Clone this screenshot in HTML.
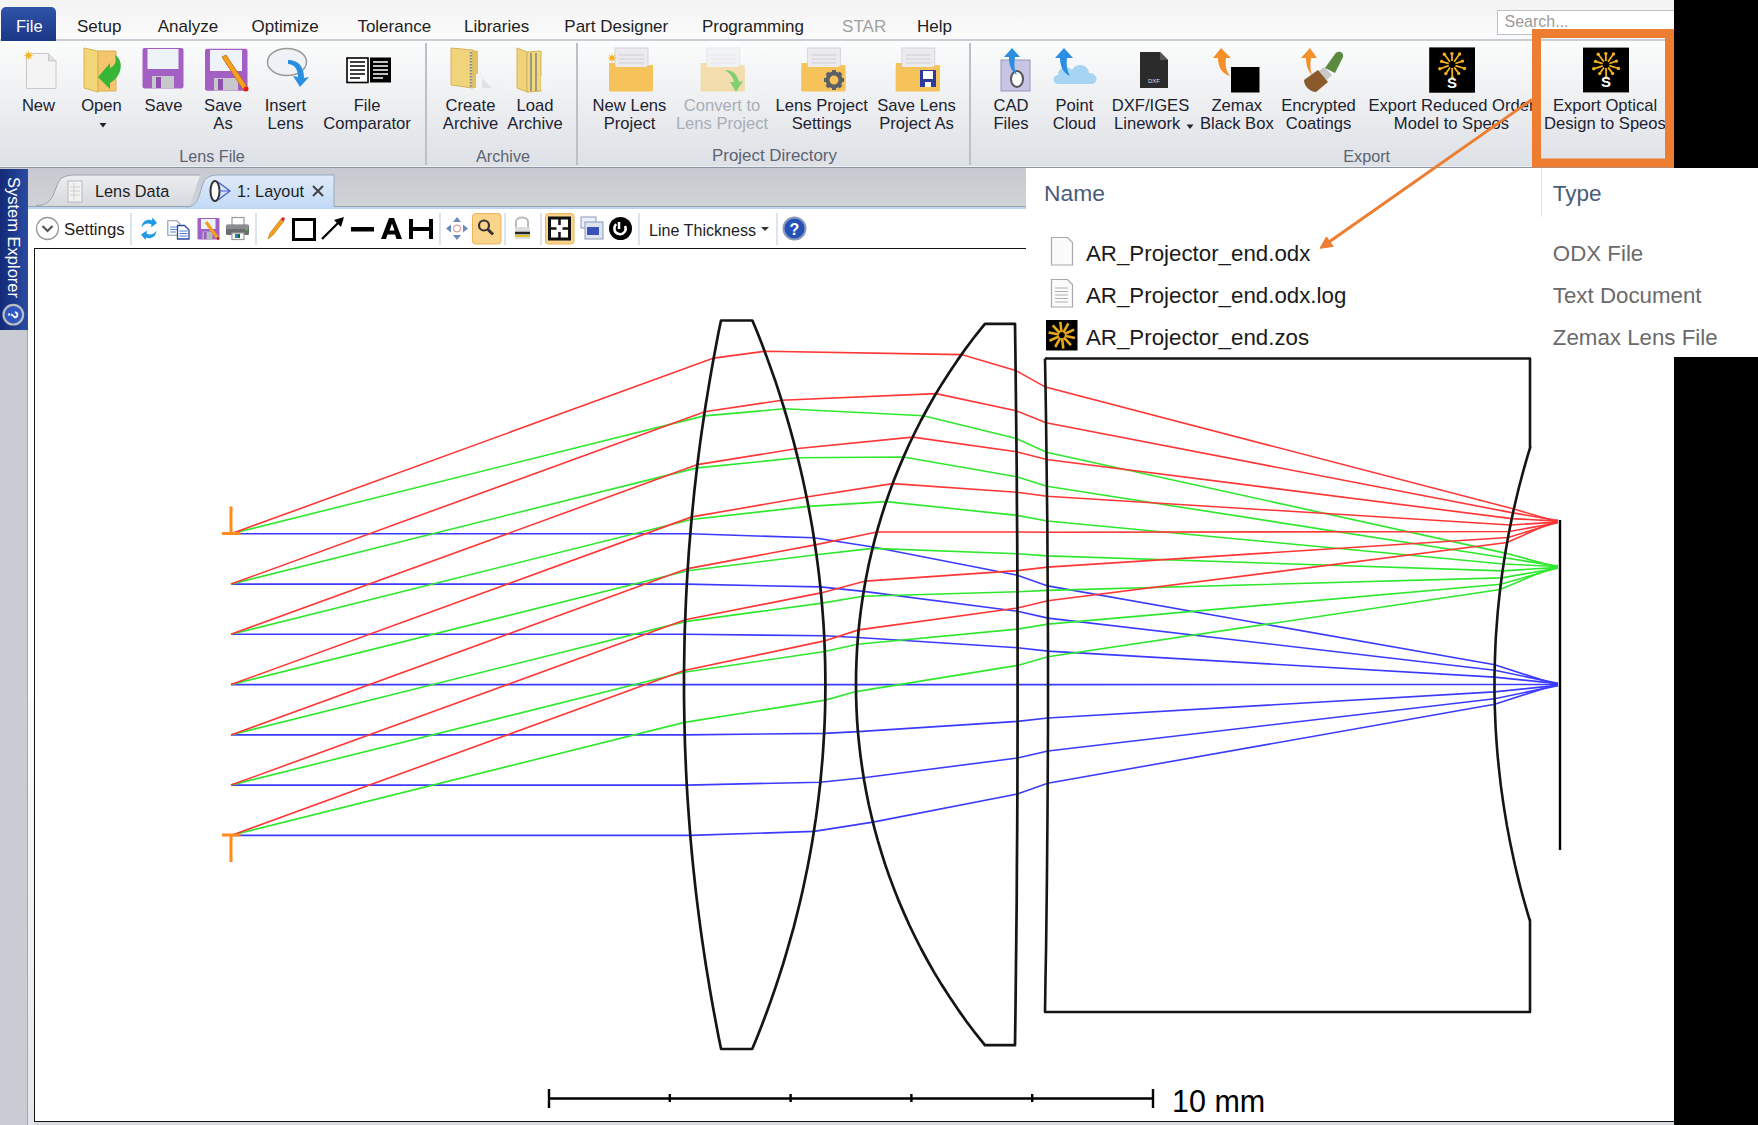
<!DOCTYPE html><html><head><meta charset="utf-8"><style>
*{margin:0;padding:0;box-sizing:border-box}
html,body{width:1758px;height:1125px;overflow:hidden;background:#fff;font-family:"Liberation Sans", sans-serif}
.a{position:absolute}
.t{position:absolute;white-space:nowrap;line-height:1;font-family:"Liberation Sans", sans-serif}
.c{width:300px;text-align:center}
</style></head><body>

<div class="a" style="left:0;top:0;width:1758px;height:40px;background:linear-gradient(#f3f3f4,#fbfbfb)"></div>
<div class="a" style="left:0;top:39px;width:1758px;height:2px;background:#c9ced6"></div>
<div class="a" style="left:1px;top:6.5px;width:55px;height:34px;border-radius:5px 5px 0 0;background:linear-gradient(#2f54a8,#1b3787)"></div>
<div class="t" style="left:16.0px;top:18.0px;font-size:16.5px;color:#fff;">File</div>
<div class="t" style="left:77.0px;top:17.6px;font-size:17px;color:#1e1e1e;">Setup</div>
<div class="t" style="left:157.7px;top:17.6px;font-size:17px;color:#1e1e1e;">Analyze</div>
<div class="t" style="left:251.6px;top:17.6px;font-size:17px;color:#1e1e1e;">Optimize</div>
<div class="t" style="left:357.4px;top:17.6px;font-size:17px;color:#1e1e1e;">Tolerance</div>
<div class="t" style="left:464.0px;top:17.6px;font-size:17px;color:#1e1e1e;">Libraries</div>
<div class="t" style="left:564.3px;top:17.6px;font-size:17px;color:#1e1e1e;">Part Designer</div>
<div class="t" style="left:701.9px;top:17.6px;font-size:17px;color:#1e1e1e;">Programming</div>
<div class="t" style="left:842.1px;top:17.6px;font-size:17px;color:#a0a0a0;">STAR</div>
<div class="t" style="left:917.0px;top:17.6px;font-size:17px;color:#1e1e1e;">Help</div>
<div class="a" style="left:1497px;top:10px;width:200px;height:25px;border:1px solid #bcc1c8;background:#fff"></div>
<div class="t" style="left:1504.5px;top:14.1px;font-size:16px;color:#9a9a9a;">Search...</div>
<div class="a" style="left:0;top:41px;width:1758px;height:126px;background:linear-gradient(#fbfcfc 0%,#eef0f2 45%,#dde0e5 100%)"></div>
<div class="a" style="left:0;top:166.5px;width:1758px;height:1.5px;background:#8c95a2"></div>
<div class="a" style="left:425px;top:43px;width:2px;height:122px;background:#bcc1c8"></div>
<div class="a" style="left:576px;top:43px;width:2px;height:122px;background:#bcc1c8"></div>
<div class="a" style="left:969px;top:43px;width:2px;height:122px;background:#bcc1c8"></div>
<div class="t c" style="left:-111.5px;top:98.4px;font-size:16.6px;color:#1c2230;">New</div>
<div class="t c" style="left:-48.5px;top:98.4px;font-size:16.6px;color:#1c2230;">Open</div>
<div class="t c" style="left:13.5px;top:98.4px;font-size:16.6px;color:#1c2230;">Save</div>
<div class="t c" style="left:73.0px;top:98.4px;font-size:16.6px;color:#1c2230;">Save</div>
<div class="t c" style="left:73.0px;top:116.4px;font-size:16.6px;color:#1c2230;">As</div>
<div class="t c" style="left:135.5px;top:98.4px;font-size:16.6px;color:#1c2230;">Insert</div>
<div class="t c" style="left:135.5px;top:116.4px;font-size:16.6px;color:#1c2230;">Lens</div>
<div class="t c" style="left:217.0px;top:98.4px;font-size:16.6px;color:#1c2230;">File</div>
<div class="t c" style="left:217.0px;top:116.4px;font-size:16.6px;color:#1c2230;">Comparator</div>
<div class="t c" style="left:320.5px;top:98.4px;font-size:16.6px;color:#1c2230;">Create</div>
<div class="t c" style="left:320.5px;top:116.4px;font-size:16.6px;color:#1c2230;">Archive</div>
<div class="t c" style="left:385.0px;top:98.4px;font-size:16.6px;color:#1c2230;">Load</div>
<div class="t c" style="left:385.0px;top:116.4px;font-size:16.6px;color:#1c2230;">Archive</div>
<div class="t c" style="left:479.5px;top:98.4px;font-size:16.6px;color:#1c2230;">New Lens</div>
<div class="t c" style="left:479.5px;top:116.4px;font-size:16.6px;color:#1c2230;">Project</div>
<div class="t c" style="left:572.0px;top:98.4px;font-size:16.6px;color:#a9aeb6;">Convert to</div>
<div class="t c" style="left:572.0px;top:116.4px;font-size:16.6px;color:#a9aeb6;">Lens Project</div>
<div class="t c" style="left:671.7px;top:98.4px;font-size:16.6px;color:#1c2230;">Lens Project</div>
<div class="t c" style="left:671.7px;top:116.4px;font-size:16.6px;color:#1c2230;">Settings</div>
<div class="t c" style="left:766.5px;top:98.4px;font-size:16.6px;color:#1c2230;">Save Lens</div>
<div class="t c" style="left:766.5px;top:116.4px;font-size:16.6px;color:#1c2230;">Project As</div>
<div class="t c" style="left:861.0px;top:98.4px;font-size:16.6px;color:#1c2230;">CAD</div>
<div class="t c" style="left:861.0px;top:116.4px;font-size:16.6px;color:#1c2230;">Files</div>
<div class="t c" style="left:924.4px;top:98.4px;font-size:16.6px;color:#1c2230;">Point</div>
<div class="t c" style="left:924.4px;top:116.4px;font-size:16.6px;color:#1c2230;">Cloud</div>
<div class="t c" style="left:1000.5px;top:98.4px;font-size:16.6px;color:#1c2230;">DXF/IGES</div>
<div class="t c" style="left:1086.8px;top:98.4px;font-size:16.6px;color:#1c2230;">Zemax</div>
<div class="t c" style="left:1086.8px;top:116.4px;font-size:16.6px;color:#1c2230;">Black Box</div>
<div class="t c" style="left:1168.5px;top:98.4px;font-size:16.6px;color:#1c2230;">Encrypted</div>
<div class="t c" style="left:1168.5px;top:116.4px;font-size:16.6px;color:#1c2230;">Coatings</div>
<div class="t c" style="left:1301.5px;top:98.4px;font-size:16.6px;color:#1c2230;">Export Reduced Order</div>
<div class="t c" style="left:1301.5px;top:116.4px;font-size:16.6px;color:#1c2230;">Model to Speos</div>
<div class="t c" style="left:1455.0px;top:98.4px;font-size:16.6px;color:#1c2230;">Export Optical</div>
<div class="t c" style="left:1455.0px;top:116.4px;font-size:16.6px;color:#1c2230;">Design to Speos</div>
<div class="t" style="left:1114.0px;top:116.4px;font-size:16.6px;color:#1c2230;">Linework</div>
<div class="t c" style="left:62.0px;top:148.3px;font-size:16.2px;color:#5b6472;">Lens File</div>
<div class="t c" style="left:353.0px;top:148.3px;font-size:16.2px;color:#5b6472;">Archive</div>
<div class="t c" style="left:624.5px;top:147.7px;font-size:16.9px;color:#5b6472;">Project Directory</div>
<div class="t c" style="left:1216.7px;top:148.3px;font-size:16.2px;color:#5b6472;">Export</div>
<svg class="a" style="left:0;top:0" width="1758" height="170"><path d="M99.5,123 h7 l-3.5,4.5z M1186.5,124.5 h7 l-3.5,4.5z" fill="#1c2230"/></svg>
<svg class="a" style="left:0;top:0" width="1758" height="170"><path d="M26.5,53.5 h22 l7.5,7.5 v27.5 h-29.5z" fill="#f4f4f4" stroke="#c8c8c8" stroke-width="1"/><path d="M48.5,53.5 v7.5 h7.5" fill="#e0e0e0" stroke="#c8c8c8"/><polygon points="33.5,55.5 30.3,56.3 32.0,59.0 29.3,57.3 28.5,60.5 27.7,57.3 25.0,59.0 26.7,56.3 23.5,55.5 26.7,54.7 25.0,52.0 27.7,53.7 28.5,50.5 29.3,53.7 32.0,52.0 30.3,54.7" fill="#f7b21e"/><path d="M84,48 l14,3 v41 l-14,-4z" fill="#f3d57a" stroke="#d9b44e"/><path d="M98,51 h18 v40 h-18z" fill="#f4c56c" stroke="#d9ae4e"/><path d="M98,77 L110,63 L110,68 C115,66 117,61 115,55 C123,59 124,75 110,83 L110,89 Z" fill="#36b536"/><rect x="142.5" y="48" width="41" height="40.5" rx="2" fill="#a45fc4"/><rect x="147.5" y="49" width="31" height="20" fill="#eef3f8"/><rect x="152" y="76" width="22" height="12.5" fill="#c8c8cc"/><rect x="156" y="77" width="5" height="11" fill="#9050b0"/><rect x="205" y="48.7" width="42.5" height="42" rx="2" fill="#a45fc4"/><rect x="210" y="50" width="32" height="21" fill="#eef3f8"/><rect x="214" y="78" width="24" height="12.5" fill="#c8c8cc"/><rect x="218" y="79" width="5" height="11" fill="#9050b0"/><path d="M222,57 l4,-2 l22,33 l-4,3z" fill="#f6a21c" stroke="#b56a10" stroke-width="0.8"/><circle cx="246" cy="89" r="2.5" fill="#e21b1b"/><ellipse cx="287" cy="62" rx="19.5" ry="13.5" fill="#eef2f6" stroke="#9a9a9a" stroke-width="1.5"/><path d="M288,60 c10,0 16,6 16,18 l5,-1 l-9,10 l-7,-11 l5,1 c0,-8 -4,-13 -10,-13z" fill="#2a8fe0"/><rect x="347" y="58" width="21" height="24.5" fill="#fff" stroke="#000" stroke-width="1.6"/><rect x="370" y="57.5" width="21" height="25" fill="#000"/><path d="M350,62 h15 M350,66 h15 M350,70 h15 M350,74 h15 M350,78 h10" stroke="#000" stroke-width="1.6"/><path d="M373,62 h15 M373,66 h15 M373,70 h15 M373,74 h15 M373,78 h10" stroke="#fff" stroke-width="1.6"/><path d="M451,48 l22,2 v38 l-22,-3z" fill="#f0d37a" stroke="#d4b45a"/><path d="M473,50 l5,1 v37 l-5,0z" fill="#e3c060"/><path d="M471,52 v36" stroke="#7a8aa0" stroke-width="2.5" stroke-dasharray="1.5,1.5"/><rect x="476" y="74" width="6" height="14" fill="#f4f4f4"/><path d="M482,78 l10,10 h-10z" fill="#d0d0d0" opacity="0.5"/><path d="M517,48 l10,4 v40 l-10,-4z" fill="#f0d37a" stroke="#d4b45a"/><path d="M527,52 l14,-1 v40 l-14,1z" fill="#f2d87c" stroke="#d4b45a"/><path d="M531,53 v38 M536,53 v38" stroke="#8a8a80" stroke-width="1.6"/><rect x="541" y="76" width="6" height="14" fill="#f4f4f4"/><g opacity="1"><rect x="615" y="48" width="33" height="24" fill="#ebebef" stroke="#d6d6da"/><path d="M619,55 h25 M619,59 h25 M619,63 h25" stroke="#d0d0d4" stroke-width="1.2"/><path d="M609,63 h6 v4 h31 l3,-2 h4 v26 h-44z" fill="#f5c35a"/><rect x="609" y="67" width="44" height="24.5" rx="1.5" fill="#f5c35a"/></g><polygon points="617.0,58.0 613.8,58.8 615.5,61.5 612.8,59.8 612.0,63.0 611.2,59.8 608.5,61.5 610.2,58.8 607.0,58.0 610.2,57.2 608.5,54.5 611.2,56.2 612.0,53.0 612.8,56.2 615.5,54.5 613.8,57.2" fill="#f7b21e"/><g opacity="0.45"><rect x="706.7" y="48" width="33" height="24" fill="#ebebef" stroke="#d6d6da"/><path d="M710.7,55 h25 M710.7,59 h25 M710.7,63 h25" stroke="#d0d0d4" stroke-width="1.2"/><path d="M700.7,63 h6 v4 h31 l3,-2 h4 v26 h-44z" fill="#f5c35a"/><rect x="700.7" y="67" width="44" height="24.5" rx="1.5" fill="#f5c35a"/></g><path d="M725,70 c8,0 12,4 14,12 l4,-1 l-7,11 l-6,-10 l4,0 c-1,-6 -5,-9 -9,-12z" fill="#80d070"/><g opacity="1"><rect x="807.4" y="48" width="33" height="24" fill="#ebebef" stroke="#d6d6da"/><path d="M811.4,55 h25 M811.4,59 h25 M811.4,63 h25" stroke="#d0d0d4" stroke-width="1.2"/><path d="M801.4,63 h6 v4 h31 l3,-2 h4 v26 h-44z" fill="#f5c35a"/><rect x="801.4" y="67" width="44" height="24.5" rx="1.5" fill="#f5c35a"/></g><g transform="translate(834,80)"><circle r="6.5" fill="none" stroke="#5b6068" stroke-width="4"/><rect x="-2" y="-10" width="4" height="5" fill="#5b6068" transform="rotate(0)"/><rect x="-2" y="-10" width="4" height="5" fill="#5b6068" transform="rotate(45)"/><rect x="-2" y="-10" width="4" height="5" fill="#5b6068" transform="rotate(90)"/><rect x="-2" y="-10" width="4" height="5" fill="#5b6068" transform="rotate(135)"/><rect x="-2" y="-10" width="4" height="5" fill="#5b6068" transform="rotate(180)"/><rect x="-2" y="-10" width="4" height="5" fill="#5b6068" transform="rotate(225)"/><rect x="-2" y="-10" width="4" height="5" fill="#5b6068" transform="rotate(270)"/><rect x="-2" y="-10" width="4" height="5" fill="#5b6068" transform="rotate(315)"/></g><g opacity="1"><rect x="901.8" y="48" width="33" height="24" fill="#ebebef" stroke="#d6d6da"/><path d="M905.8,55 h25 M905.8,59 h25 M905.8,63 h25" stroke="#d0d0d4" stroke-width="1.2"/><path d="M895.8,63 h6 v4 h31 l3,-2 h4 v26 h-44z" fill="#f5c35a"/><rect x="895.8" y="67" width="44" height="24.5" rx="1.5" fill="#f5c35a"/></g><rect x="920" y="70" width="16" height="17" fill="#2b3a9c"/><rect x="923" y="71" width="10" height="8" fill="#fff"/><rect x="925" y="82" width="6" height="5" fill="#fff"/><rect x="1001" y="60" width="29" height="31" fill="#c8c4e4" stroke="#9a96b8"/><ellipse cx="1017" cy="79" rx="6" ry="8" fill="#fff" stroke="#555" stroke-width="2"/><path d="M1012,48 l-8,9 h5 c0,8 2,14 8,18 c-3,-5 -3,-11 -2,-18 h5z" fill="#2b8ee0"/><path d="M1058,84 c-6,0 -6,-9 0,-9 c0,-8 10,-10 14,-5 c4,-8 16,-6 17,3 c8,-1 11,11 2,11z" fill="#a8d4f4"/><path d="M1064,48 l-9,10 h5 c0,8 3,15 10,18 c-3,-5 -4,-11 -3,-18 h6z" fill="#2b8ee0"/><path d="M1140,52 h20 l8,8 v28 h-28z" fill="#2b2b2b"/><path d="M1160,52 v8 h8" fill="#555"/><text x="1154" y="83" font-family="Liberation Sans" font-size="6" fill="#ddd" text-anchor="middle">DXF</text><rect x="1231" y="67" width="28.5" height="25.5" fill="#000"/><path d="M1221,48 l-8,10 h5 c0,9 4,16 12,18 c-4,-5 -5,-11 -4,-18 h5z" fill="#f4902a"/><path d="M1325,68 l10,-14 c3,-4 9,-2 8,3 l-8,16z" fill="#5a8a40"/><path d="M1318,72 l6,-5 l8,8 l-5,5z" fill="#c8c8c8"/><path d="M1304,80 l14,-10 l10,12 l-12,10 c-6,0 -12,-6 -12,-12z" fill="#8a5a2a"/><path d="M1310,48 l-9,10 h5 c0,7 2,13 6,17 c-2,-5 -2,-11 -1,-17 h6z" fill="#f4902a"/><rect x="1429.2" y="47.4" width="45.8" height="45.3" fill="#000"/><line x1="1455.4" y1="65.6" x2="1464.5" y2="68.5" stroke="#f2b01c" stroke-width="1.8"/><circle cx="1464.5" cy="68.5" r="1.7" fill="#f2b01c"/><line x1="1454.2" y1="67.4" x2="1458.7" y2="73.4" stroke="#f2b01c" stroke-width="1.8"/><circle cx="1458.7" cy="73.4" r="1.7" fill="#f2b01c"/><line x1="1452.1" y1="68.1" x2="1452.3" y2="77.6" stroke="#f2b01c" stroke-width="1.8"/><circle cx="1452.3" cy="77.6" r="1.7" fill="#f2b01c"/><line x1="1450.1" y1="67.5" x2="1445.8" y2="73.6" stroke="#f2b01c" stroke-width="1.8"/><circle cx="1445.8" cy="73.6" r="1.7" fill="#f2b01c"/><line x1="1448.8" y1="65.7" x2="1439.8" y2="68.8" stroke="#f2b01c" stroke-width="1.8"/><circle cx="1439.8" cy="68.8" r="1.7" fill="#f2b01c"/><line x1="1448.8" y1="63.6" x2="1441.6" y2="61.4" stroke="#f2b01c" stroke-width="1.8"/><circle cx="1441.6" cy="61.4" r="1.7" fill="#f2b01c"/><line x1="1450.0" y1="61.8" x2="1444.3" y2="54.2" stroke="#f2b01c" stroke-width="1.8"/><circle cx="1444.3" cy="54.2" r="1.7" fill="#f2b01c"/><line x1="1452.1" y1="61.1" x2="1451.9" y2="53.6" stroke="#f2b01c" stroke-width="1.8"/><circle cx="1451.9" cy="53.6" r="1.7" fill="#f2b01c"/><line x1="1454.1" y1="61.8" x2="1459.6" y2="54.0" stroke="#f2b01c" stroke-width="1.8"/><circle cx="1459.6" cy="54.0" r="1.7" fill="#f2b01c"/><line x1="1455.4" y1="63.5" x2="1462.5" y2="61.1" stroke="#f2b01c" stroke-width="1.8"/><circle cx="1462.5" cy="61.1" r="1.7" fill="#f2b01c"/><text x="1452.1000000000001" y="87.69999999999999" font-family="Liberation Sans" font-weight="bold" font-size="15" fill="#fff" text-anchor="middle">S</text><rect x="1583" y="47.6" width="46" height="44.8" fill="#000"/><line x1="1609.3" y1="65.7" x2="1618.4" y2="68.5" stroke="#f2b01c" stroke-width="1.8"/><circle cx="1618.4" cy="68.5" r="1.7" fill="#f2b01c"/><line x1="1608.1" y1="67.4" x2="1612.6" y2="73.4" stroke="#f2b01c" stroke-width="1.8"/><circle cx="1612.6" cy="73.4" r="1.7" fill="#f2b01c"/><line x1="1606.0" y1="68.1" x2="1606.2" y2="77.6" stroke="#f2b01c" stroke-width="1.8"/><circle cx="1606.2" cy="77.6" r="1.7" fill="#f2b01c"/><line x1="1604.0" y1="67.5" x2="1599.7" y2="73.6" stroke="#f2b01c" stroke-width="1.8"/><circle cx="1599.7" cy="73.6" r="1.7" fill="#f2b01c"/><line x1="1602.7" y1="65.8" x2="1593.7" y2="68.8" stroke="#f2b01c" stroke-width="1.8"/><circle cx="1593.7" cy="68.8" r="1.7" fill="#f2b01c"/><line x1="1602.7" y1="63.6" x2="1595.5" y2="61.4" stroke="#f2b01c" stroke-width="1.8"/><circle cx="1595.5" cy="61.4" r="1.7" fill="#f2b01c"/><line x1="1603.9" y1="61.8" x2="1598.2" y2="54.2" stroke="#f2b01c" stroke-width="1.8"/><circle cx="1598.2" cy="54.2" r="1.7" fill="#f2b01c"/><line x1="1606.0" y1="61.1" x2="1605.8" y2="53.6" stroke="#f2b01c" stroke-width="1.8"/><circle cx="1605.8" cy="53.6" r="1.7" fill="#f2b01c"/><line x1="1608.0" y1="61.8" x2="1613.5" y2="54.0" stroke="#f2b01c" stroke-width="1.8"/><circle cx="1613.5" cy="54.0" r="1.7" fill="#f2b01c"/><line x1="1609.3" y1="63.5" x2="1616.4" y2="61.1" stroke="#f2b01c" stroke-width="1.8"/><circle cx="1616.4" cy="61.1" r="1.7" fill="#f2b01c"/><text x="1606.0" y="87.4" font-family="Liberation Sans" font-weight="bold" font-size="15" fill="#fff" text-anchor="middle">S</text></svg>
<div class="a" style="left:0;top:168px;width:1758px;height:957px;background:#c9cdd3"></div>
<div class="a" style="left:28px;top:168px;width:1730px;height:39.5px;background:linear-gradient(#c6cad0,#d0d3d8)"></div>
<div class="a" style="left:28px;top:207px;width:1730px;height:913px;background:#fff"></div>
<div class="a" style="left:28px;top:206.5px;width:1730px;height:2px;background:#bcd6f2"></div>
<div class="a" style="left:28px;top:205.5px;width:1730px;height:1px;background:#9ea3aa"></div>
<div class="a" style="left:0;top:165.5px;width:1758px;height:1px;background:#eceef1"></div>
<div class="a" style="left:28px;top:1121px;width:1730px;height:4px;background:#d8dbdf"></div>
<div class="a" style="left:27px;top:330px;width:1.2px;height:795px;background:#a3a8b0"></div>
<div class="a" style="left:28.2px;top:700px;width:5.5px;height:425px;background:linear-gradient(#fbfbfc,#e3e6ea)"></div>
<svg class="a" style="left:0;top:160px" width="400" height="50">
<path d="M36,45.5 C48,45.5 52,40 56,28 C59,19 62,15 76,15 H200 L190,45.5z" fill="url(#g1)"/>
<path d="M36,45.5 C48,45.5 52,40 56,28 C59,19 62,15 76,15 H200" fill="none" stroke="#9ea4ad" stroke-width="1"/>
<path d="M186,47.5 C196,47 198,40 201,30 C204,19 206,15 220,15 H334 V47.5z" fill="url(#g2)"/>
<path d="M186,47 C196,47 198,40 201,30 C204,19 206,15 220,15 H334 V47" fill="none" stroke="#98a9be" stroke-width="1"/>
<defs><linearGradient id="g1" x1="0" y1="0" x2="0" y2="1"><stop offset="0" stop-color="#eceef1"/><stop offset="1" stop-color="#d6d9de"/></linearGradient>
<linearGradient id="g2" x1="0" y1="0" x2="0" y2="1"><stop offset="0" stop-color="#dfeaf8"/><stop offset="1" stop-color="#c3dbf6"/></linearGradient></defs>
<rect x="68" y="21" width="14" height="21" fill="#f2f2f2" stroke="#b9b9b9"/><path d="M70,27 h10 M70,31 h10 M70,35 h10 M74,23 v17" stroke="#cfcfcf"/>
<ellipse cx="215" cy="31" rx="4.5" ry="10" fill="#fff" stroke="#333" stroke-width="2"/><path d="M218,22 L230,31 L218,40 M219,31 H230" stroke="#4a5ad0" fill="none" stroke-width="1.2"/>
<path d="M313,26 l10,10 M323,26 l-10,10" stroke="#444" stroke-width="2"/>
</svg>
<div class="t" style="left:95.0px;top:183.2px;font-size:16.3px;color:#1e1e1e;">Lens Data</div>
<div class="t" style="left:237.0px;top:182.9px;font-size:16.3px;color:#1e1e1e;">1: Layout</div>
<div class="a" style="left:0;top:168.5px;width:28px;height:161px;background:linear-gradient(90deg,#132a78,#2a4ba3)"></div>
<div class="t" style="left:4px;top:177px;font-size:16.5px;color:#fff;transform-origin:0 0;transform:translate(18px,0) rotate(90deg)">System Explorer</div>
<svg class="a" style="left:0;top:300px" width="28" height="30"><circle cx="13.3" cy="14.7" r="9.8" fill="#2f55c0" stroke="#b9bcc2" stroke-width="2.2"/><text x="0" y="0" transform="translate(13.3,14.7) rotate(90) translate(0,5)" font-family="Liberation Sans" font-weight="bold" font-size="14" fill="#fff" text-anchor="middle">?</text></svg>
<div class="t" style="left:64.0px;top:221.8px;font-size:16.8px;color:#1e1e1e;">Settings</div>
<div class="t" style="left:649.0px;top:222.4px;font-size:16.1px;color:#1e1e1e;">Line Thickness</div>
<svg class="a" style="left:0;top:0" width="820" height="250"><circle cx="47.5" cy="228.5" r="11" fill="#fff" stroke="#9a9a9a" stroke-width="1.3"/><path d="M42.5,226 l5,5 l5,-5" stroke="#555" stroke-width="2.2" fill="none"/><line x1="131" y1="213" x2="131" y2="245" stroke="#c5d3e3" stroke-width="1.2"/><line x1="256" y1="213" x2="256" y2="245" stroke="#c5d3e3" stroke-width="1.2"/><line x1="440" y1="213" x2="440" y2="245" stroke="#c5d3e3" stroke-width="1.2"/><line x1="505" y1="213" x2="505" y2="245" stroke="#c5d3e3" stroke-width="1.2"/><line x1="541" y1="213" x2="541" y2="245" stroke="#c5d3e3" stroke-width="1.2"/><line x1="639" y1="213" x2="639" y2="245" stroke="#c5d3e3" stroke-width="1.2"/><line x1="777" y1="213" x2="777" y2="245" stroke="#c5d3e3" stroke-width="1.2"/><path d="M141.5,227.5 C142,220 149,218.5 152,220.5 L152.5,217.5 L157,223 L151,227.5 L151.5,224.5 C148,222.5 144,223.5 141.5,227.5z" fill="#1e9be8"/><path d="M156.5,230.5 C156,238 149,239.5 146,237.5 L145.5,240 L141,234.5 L147,230.5 L146.5,233.5 C150,235.5 154,234.5 156.5,230.5z" fill="#1e9be8"/><path d="M167.8,220.8 h9 l3,3 v11.5 h-12z" fill="#fff" stroke="#8a9ab0" stroke-width="1.1"/><path d="M170,227 h8 M170,229.5 h8 M170,232 h6" stroke="#5a8ad8" stroke-width="1.1"/><path d="M177.5,225.5 h7 l4.5,4.5 v9 h-11.5z" fill="#fff" stroke="#2a4aa0" stroke-width="1.3"/><path d="M179.5,231 h8 M179.5,233.5 h8 M179.5,236 h8" stroke="#4a7ad0" stroke-width="1.1"/><rect x="197.5" y="218" width="22" height="21.5" rx="1" fill="#a060c8"/><rect x="201" y="219" width="14.5" height="10" fill="#eaf2fa"/><rect x="202.5" y="231.5" width="10" height="8" fill="#b8b8c0"/><rect x="204" y="232" width="2.5" height="7" fill="#9a5ac0"/><path d="M206,222 L217.5,238" stroke="#f4a01a" stroke-width="3.2"/><circle cx="218" cy="238.5" r="1.4" fill="#d02020"/><rect x="232" y="217.5" width="12" height="9" fill="#fff" stroke="#9a9a9a" stroke-width="1.2"/><rect x="226" y="224.5" width="23" height="10.5" rx="1.5" fill="#6a6c70"/><rect x="226.5" y="225" width="22" height="4" fill="#8a8c90"/><rect x="232" y="233" width="12" height="6.5" fill="#fff" stroke="#9a9a9a" stroke-width="1.2"/><rect x="235" y="234" width="5" height="4" fill="#2a7ac0"/><rect x="238" y="234" width="2" height="4" fill="#1a6a30"/><circle cx="246.5" cy="229.5" r="1" fill="#6ad04a"/><path d="M268,239 l2,-6 l11,-14 l3,2 l-11,14z" fill="#f4a21c" stroke="#b06a10" stroke-width="0.6"/><circle cx="283" cy="219" r="1.8" fill="#e02020"/><rect x="293.5" y="219.5" width="21" height="20" fill="none" stroke="#000" stroke-width="3"/><path d="M322,239 L341,220" stroke="#000" stroke-width="2.3"/><path d="M344,217 l-10,3 l7,7z" fill="#000"/><rect x="351" y="227" width="23" height="4.5" fill="#000"/><path d="M381,239 l8,-21 h5 l8,21 h-5.5 l-1.5,-4.5 h-7.5 l-1.5,4.5z M389.5,230.5 h5 l-2.5,-7z" fill="#000" fill-rule="evenodd"/><path d="M411,219 v20 M431,219 v20 M411,229 h20" stroke="#000" stroke-width="4"/><path d="M457,217 l4,5 h-8z M457,240 l4,-5 h-8z M446,228.5 l5,-4 v8z M468,228.5 l-5,-4 v8z" fill="#6a8ab8"/><circle cx="457" cy="228.5" r="3.5" fill="none" stroke="#e08080" stroke-width="1"/><rect x="472.5" y="213.5" width="28.5" height="30.5" rx="3" fill="#fbd38a" stroke="#e8b45c"/><circle cx="484" cy="225.5" r="5" fill="none" stroke="#333" stroke-width="2.2"/><path d="M488,229.5 l5,5" stroke="#333" stroke-width="3"/><path d="M516,228 v-6 c0,-6 12,-6 12,0 v6" fill="none" stroke="#bbb" stroke-width="2"/><rect x="515" y="227" width="15" height="12" fill="#ddd"/><path d="M515,233 h15" stroke="#222" stroke-width="2.5"/><path d="M515,236 h15" stroke="#e0c020" stroke-width="2"/><rect x="545.5" y="213.5" width="28.5" height="30.5" rx="3" fill="#fbd38a" stroke="#e8b45c"/><rect x="549.5" y="218" width="20" height="21" fill="#fff" stroke="#111" stroke-width="3"/><path d="M559.5,219 v6 M559.5,232 v6 M550.5,228.5 h6 M562.5,228.5 h6" stroke="#111" stroke-width="2.5"/><rect x="581" y="217" width="15" height="11" fill="#eef" stroke="#8a9ab8"/><rect x="585" y="222" width="18" height="17" fill="#dde4f0" stroke="#8a9ab8"/><rect x="587" y="227" width="12" height="8" fill="#3a52b8"/><circle cx="620.5" cy="228.5" r="11.5" fill="#000"/><path d="M616,224 c-3,4 -2,9 3,10 c5,1 8,-4 6,-8 M619,222 v7" stroke="#fff" stroke-width="2.5" fill="none"/><path d="M761,227 h8 l-4,4z" fill="#333"/><circle cx="794.5" cy="228.5" r="11" fill="#2450b8" stroke="#8a9ab8" stroke-width="2"/><text x="794.5" y="235" font-family="Liberation Sans" font-weight="bold" font-size="16" fill="#fff" text-anchor="middle">?</text></svg>
<div class="a" style="left:33.5px;top:247.5px;width:1700px;height:874px;border:1.5px solid #151515;background:#fff"></div>
<svg class="a" style="left:0;top:0" width="1758" height="1125"><g fill="none" stroke-width="1.6"><polyline points="231.0,533.8 690.3,533.8 813.9,537.8 872.9,547.0 1017.4,575.2 1047.7,585.9 1494.7,664.8 1558.0,685.0" stroke="#3b3bff"/>
<polyline points="231.0,584.1 686.8,584.1 820.3,586.9 863.7,591.4 1017.5,611.2 1047.9,618.1 1494.6,670.3 1558.0,683.4" stroke="#3b3bff"/>
<polyline points="231.0,634.3 684.7,634.3 824.1,635.8 857.9,637.5 1017.6,647.8 1048.0,651.1 1494.5,677.1 1558.0,683.6" stroke="#3b3bff"/>
<polyline points="231.0,684.6 684.0,684.6 825.4,684.6 856.0,684.6 1017.6,684.6 1048.0,684.6 1494.5,684.5 1558.0,684.5" stroke="#3b3bff"/>
<polyline points="231.0,734.9 684.7,734.9 824.1,733.4 858.0,731.6 1017.6,721.4 1048.0,718.0 1494.5,691.9 1558.0,685.4" stroke="#3b3bff"/>
<polyline points="231.0,785.1 686.8,785.1 820.3,782.2 863.7,777.8 1017.5,758.0 1047.9,751.0 1494.6,698.7 1558.0,685.6" stroke="#3b3bff"/>
<polyline points="231.0,835.4 690.3,835.4 813.9,831.4 872.9,822.1 1017.4,794.0 1047.7,783.3 1494.7,704.2 1558.0,684.0" stroke="#3b3bff"/>
<polyline points="231.0,533.8 704.1,415.9 784.2,408.8 923.5,415.7 1016.4,438.4 1046.5,452.2 1505.3,553.1 1558.0,567.3" stroke="#2ee82e"/>
<polyline points="231.0,584.1 697.0,467.9 797.8,457.8 903.5,457.0 1016.7,476.7 1046.9,486.2 1504.5,557.8 1558.0,566.1" stroke="#2ee82e"/>
<polyline points="231.0,634.3 691.5,519.5 808.4,506.4 886.2,501.6 1017.0,515.4 1047.2,521.0 1503.6,564.0 1558.0,566.5" stroke="#2ee82e"/>
<polyline points="231.0,684.6 687.6,570.8 816.4,554.8 872.5,548.4 1017.3,553.8 1047.5,555.9 1502.5,570.9 1558.0,567.4" stroke="#2ee82e"/>
<polyline points="231.0,734.9 685.1,621.6 821.9,603.1 862.9,596.3 1017.4,591.8 1047.7,590.4 1501.6,577.9 1558.0,568.1" stroke="#2ee82e"/>
<polyline points="231.0,785.1 684.0,672.2 824.8,651.5 857.4,644.3 1017.5,629.1 1047.9,624.1 1500.8,584.3 1558.0,567.7" stroke="#2ee82e"/>
<polyline points="231.0,835.4 684.4,722.4 825.3,700.1 856.0,691.6 1017.6,665.4 1048.0,656.7 1500.1,589.5 1558.0,565.2" stroke="#2ee82e"/>
<polyline points="231.0,533.8 713.7,358.1 764.6,351.3 961.4,354.6 1015.6,370.4 1045.5,387.1 1513.8,509.0 1558.0,522.0" stroke="#ff3636"/>
<polyline points="231.0,584.1 704.7,411.7 781.6,400.3 936.0,393.6 1016.1,410.8 1046.1,422.8 1513.0,512.9 1558.0,520.6" stroke="#ff3636"/>
<polyline points="231.0,634.3 697.4,464.6 795.5,448.8 912.6,437.1 1016.5,451.8 1046.6,459.5 1511.8,518.6 1558.0,521.1" stroke="#ff3636"/>
<polyline points="231.0,684.6 691.8,516.9 806.6,497.0 892.6,483.6 1016.9,492.3 1047.0,496.2 1510.4,525.0 1558.0,522.1" stroke="#ff3636"/>
<polyline points="231.0,734.9 687.7,568.6 815.0,544.9 876.8,532.0 1017.1,532.0 1047.3,532.2 1509.2,531.5 1558.0,522.8" stroke="#ff3636"/>
<polyline points="231.0,785.1 685.2,619.8 820.9,592.9 865.5,581.1 1017.3,570.6 1047.6,567.1 1508.0,537.5 1558.0,522.3" stroke="#ff3636"/>
<polyline points="231.0,835.4 684.1,670.5 824.4,640.9 858.6,629.9 1017.5,608.0 1047.8,600.8 1507.1,542.5 1558.0,519.8" stroke="#ff3636"/></g><polygon points="721.0,320.5 718.5,332.6 716.2,344.8 713.9,356.9 711.7,369.1 709.6,381.2 707.6,393.4 705.6,405.5 703.8,417.6 702.0,429.8 700.3,441.9 698.7,454.1 697.2,466.2 695.8,478.3 694.4,490.5 693.2,502.6 692.0,514.8 690.9,526.9 689.9,539.0 688.9,551.2 688.1,563.3 687.3,575.5 686.6,587.6 686.0,599.8 685.5,611.9 685.0,624.0 684.6,636.2 684.4,648.3 684.2,660.5 684.0,672.6 684.0,684.8 684.0,696.9 684.2,709.0 684.4,721.2 684.7,733.3 685.0,745.5 685.5,757.6 686.0,769.7 686.6,781.9 687.3,794.0 688.1,806.2 689.0,818.3 689.9,830.5 690.9,842.6 692.0,854.7 693.2,866.9 694.5,879.0 695.8,891.2 697.3,903.3 698.8,915.4 700.4,927.6 702.1,939.7 703.9,951.9 705.7,964.0 707.7,976.1 709.7,988.3 711.8,1000.4 714.0,1012.6 716.3,1024.7 718.6,1036.9 721.1,1049.0 752.2,1049.0 757.2,1036.9 762.0,1024.7 766.6,1012.6 771.0,1000.4 775.2,988.3 779.2,976.1 783.1,964.0 786.7,951.9 790.2,939.7 793.6,927.6 796.7,915.4 799.7,903.3 802.5,891.2 805.1,879.0 807.6,866.9 809.9,854.7 812.1,842.6 814.0,830.5 815.9,818.3 817.5,806.2 819.0,794.0 820.4,781.9 821.5,769.7 822.6,757.6 823.4,745.5 824.1,733.3 824.7,721.2 825.1,709.0 825.3,696.9 825.4,684.8 825.3,672.6 825.1,660.5 824.7,648.3 824.2,636.2 823.5,624.0 822.6,611.9 821.6,599.8 820.4,587.6 819.1,575.5 817.6,563.3 815.9,551.2 814.1,539.0 812.2,526.9 810.0,514.8 807.7,502.6 805.2,490.5 802.6,478.3 799.8,466.2 796.8,454.1 793.7,441.9 790.4,429.8 786.9,417.6 783.2,405.5 779.4,393.4 775.4,381.2 771.1,369.1 766.7,356.9 762.2,344.8 757.4,332.6 752.4,320.5" stroke="#151515" stroke-width="2.7" fill="none" stroke-linejoin="round"/>
<polygon points="984.9,323.8 975.3,335.8 966.3,347.8 957.7,359.9 949.6,371.9 941.9,383.9 934.6,395.9 927.7,408.0 921.2,420.0 915.1,432.0 909.3,444.0 903.9,456.1 898.8,468.1 894.0,480.1 889.5,492.1 885.3,504.2 881.5,516.2 877.9,528.2 874.6,540.2 871.6,552.2 868.8,564.3 866.4,576.3 864.2,588.3 862.3,600.3 860.6,612.4 859.2,624.4 858.0,636.4 857.1,648.4 856.5,660.5 856.1,672.5 856.0,684.5 856.1,696.5 856.5,708.5 857.1,720.6 858.0,732.6 859.2,744.6 860.6,756.6 862.3,768.7 864.2,780.7 866.4,792.7 868.8,804.7 871.6,816.8 874.6,828.8 877.9,840.8 881.5,852.8 885.3,864.9 889.5,876.9 894.0,888.9 898.8,900.9 903.9,912.9 909.3,925.0 915.1,937.0 921.2,949.0 927.7,961.0 934.6,973.1 941.9,985.1 949.6,997.1 957.7,1009.1 966.3,1021.2 975.3,1033.2 984.9,1045.2 1015.0,1045.2 1015.5,1009.1 1015.9,973.1 1016.3,937.0 1016.7,900.9 1016.9,864.9 1017.2,828.8 1017.4,792.7 1017.5,756.6 1017.6,720.6 1017.6,684.5 1017.6,648.4 1017.5,612.4 1017.4,576.3 1017.2,540.2 1016.9,504.2 1016.7,468.1 1016.3,432.0 1015.9,395.9 1015.5,359.9 1015.0,323.8" stroke="#151515" stroke-width="2.7" fill="none" stroke-linejoin="round"/>
<polyline points="1045.0,358.5 1045.6,391.2 1046.1,423.9 1046.5,456.5 1046.9,489.2 1047.3,521.9 1047.5,554.5 1047.7,587.2 1047.9,619.9 1048.0,652.6 1048.0,685.2 1048.0,717.9 1047.9,750.6 1047.7,783.3 1047.5,816.0 1047.2,848.6 1046.9,881.3 1046.5,914.0 1046.1,946.6 1045.5,979.3 1045.0,1012.0 1530.0,1012.0 1530.0,920.0 1529.7,920.0 1527.3,912.1 1525.0,904.2 1522.8,896.4 1520.7,888.5 1518.7,880.6 1516.8,872.7 1514.9,864.8 1513.2,856.9 1511.5,849.0 1509.9,841.2 1508.4,833.3 1506.9,825.4 1505.6,817.5 1504.3,809.6 1503.1,801.8 1502.0,793.9 1500.9,786.0 1500.0,778.1 1499.1,770.2 1498.3,762.3 1497.5,754.5 1496.9,746.6 1496.3,738.7 1495.8,730.8 1495.4,722.9 1495.1,715.0 1494.8,707.1 1494.6,699.3 1494.5,691.4 1494.5,683.5 1494.5,675.6 1494.7,667.7 1494.9,659.9 1495.2,652.0 1495.5,644.1 1495.9,636.2 1496.5,628.3 1497.1,620.4 1497.7,612.5 1498.5,604.7 1499.3,596.8 1500.2,588.9 1501.2,581.0 1502.2,573.1 1503.4,565.2 1504.6,557.4 1505.9,549.5 1507.3,541.6 1508.7,533.7 1510.3,525.8 1511.9,518.0 1513.6,510.1 1515.4,502.2 1517.3,494.3 1519.2,486.4 1521.3,478.5 1523.4,470.6 1525.6,462.8 1527.9,454.9 1530.3,447.0 1530.0,447.0 1530.0,358.5 1045.0,358.5" stroke="#151515" stroke-width="2.6" fill="none" stroke-linejoin="round"/>
<line x1="1560" y1="520" x2="1560" y2="850" stroke="#000" stroke-width="2.4"/>
<path d="M222,533.5 H240.5 M231,506.5 V533.5 M222,835 H240.5 M231,835 V862" stroke="#ff8a1e" stroke-width="3" fill="none"/>
<path d="M549,1098.5 H1153 M549,1089 V1108 M1153,1089 V1108 M669.8,1094 V1102 M790.6,1094 V1102 M911.4,1094 V1102 M1032.2,1094 V1102" stroke="#000" stroke-width="2.4" fill="none"/></svg>
<div class="t" style="left:1172.0px;top:1086.2px;font-size:30.5px;color:#000;">10 mm</div>
<div class="a" style="left:1026px;top:167.5px;width:732px;height:189.5px;background:#fff"></div>
<div class="a" style="left:1540.5px;top:168px;width:1px;height:49px;background:#e5e5e5"></div>
<div class="t" style="left:1044.0px;top:182.4px;font-size:22.8px;color:#4a5d78;">Name</div>
<div class="t" style="left:1552.8px;top:183.0px;font-size:22.5px;color:#4a5d78;">Type</div>
<div class="t" style="left:1086.0px;top:242.6px;font-size:22.3px;color:#1a1a1a;">AR_Projector_end.odx</div>
<div class="t" style="left:1552.8px;top:242.6px;font-size:22.3px;color:#6a6a6a;">ODX File</div>
<div class="t" style="left:1086.0px;top:284.6px;font-size:22.3px;color:#1a1a1a;">AR_Projector_end.odx.log</div>
<div class="t" style="left:1552.8px;top:284.6px;font-size:22.3px;color:#6a6a6a;">Text Document</div>
<div class="t" style="left:1086.0px;top:327.1px;font-size:22.3px;color:#1a1a1a;">AR_Projector_end.zos</div>
<div class="t" style="left:1552.8px;top:327.1px;font-size:22.3px;color:#6a6a6a;">Zemax Lens File</div>
<svg class="a" style="left:0;top:0" width="1758" height="360"><path d="M1051.5,237.5 h16 l5,5 v22.5 h-21z" fill="#fbfbfb" stroke="#a8a8a8" stroke-width="1.2"/><path d="M1051.5,279.5 h16 l5,5 v22.5 h-21z" fill="#fbfbfb" stroke="#a8a8a8" stroke-width="1.2"/><path d="M1055,288 h13 M1055,291.5 h13 M1055,295 h13 M1055,298.5 h13 M1055,302 h13" stroke="#b0b0b0" stroke-width="1"/><rect x="1046" y="320" width="31.5" height="30.5" fill="#000"/><line x1="1064.7" y1="335.8" x2="1075.0" y2="337.9" stroke="#e8a81c" stroke-width="2.6"/><line x1="1063.8" y1="337.4" x2="1070.9" y2="345.1" stroke="#e8a81c" stroke-width="2.6"/><line x1="1062.1" y1="338.2" x2="1063.3" y2="348.6" stroke="#e8a81c" stroke-width="2.6"/><line x1="1060.3" y1="337.8" x2="1055.2" y2="347.0" stroke="#e8a81c" stroke-width="2.6"/><line x1="1059.1" y1="336.4" x2="1049.5" y2="340.8" stroke="#e8a81c" stroke-width="2.6"/><line x1="1058.9" y1="334.6" x2="1048.6" y2="332.5" stroke="#e8a81c" stroke-width="2.6"/><line x1="1059.8" y1="333.0" x2="1052.7" y2="325.3" stroke="#e8a81c" stroke-width="2.6"/><line x1="1061.5" y1="332.2" x2="1060.3" y2="321.8" stroke="#e8a81c" stroke-width="2.6"/><line x1="1063.3" y1="332.6" x2="1068.4" y2="323.4" stroke="#e8a81c" stroke-width="2.6"/><line x1="1064.5" y1="334.0" x2="1074.1" y2="329.6" stroke="#e8a81c" stroke-width="2.6"/></svg>
<div class="a" style="left:1674px;top:0;width:84px;height:167.5px;background:#000"></div>
<div class="a" style="left:1674px;top:357px;width:84px;height:768px;background:#000"></div>
<svg class="a" style="left:0;top:0" width="1758" height="300">
<rect x="1536.5" y="33.5" width="133" height="129.5" fill="none" stroke="#ed7d31" stroke-width="9"/>
<line x1="1532" y1="99.5" x2="1329" y2="242" stroke="#ed7d31" stroke-width="3"/>
<path d="M1320,248.3 L1326.4,236.9 L1333.2,246.4z" fill="#ed7d31" stroke="#ed7d31" stroke-width="1"/>
</svg>
</body></html>
